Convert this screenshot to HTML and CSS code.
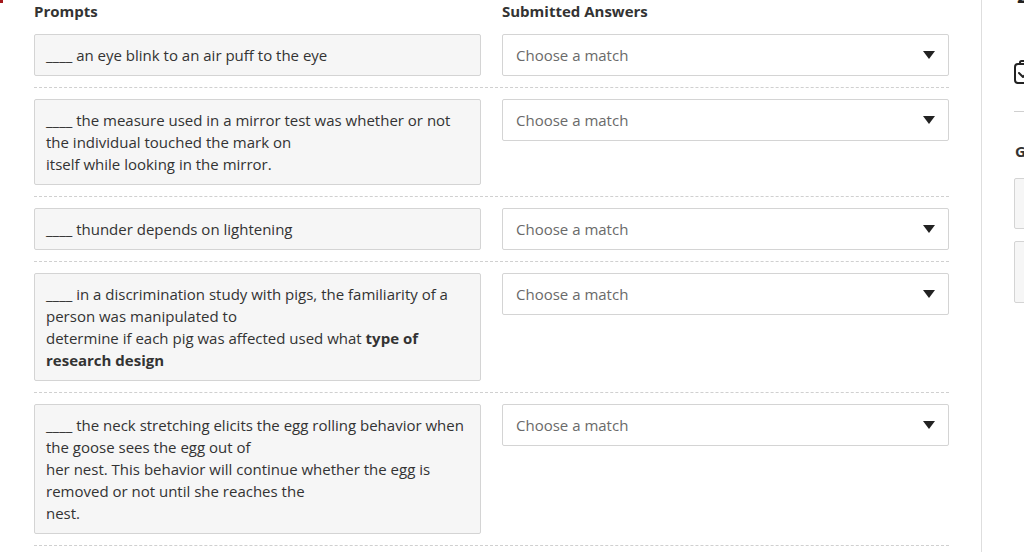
FILE: index.html
```html
<!DOCTYPE html>
<html lang="en">
<head>
<meta charset="utf-8">
<title>Matching question</title>
<link rel="stylesheet" href="styles.css">
</head>
<body>
<div class="page">
  <div class="corner-mark"></div>
  <main class="matching">
    <div class="col-heads">
      <div class="col-head">Prompts</div>
      <div class="col-head">Submitted Answers</div>
    </div>

    <div class="match-row">
      <div class="prompt">____ an eye blink to an air puff to the eye</div>
      <div class="choice"><span class="choice-text">Choose a match</span><svg class="caret" width="12" height="8" viewBox="0 0 12 8"><path d="M0 0H12L6 8Z" fill="#222"/></svg></div>
    </div>

    <div class="match-row">
      <div class="prompt">____ the measure used in a mirror test was whether or not the individual touched the mark on<br>itself while looking in the mirror.</div>
      <div class="choice"><span class="choice-text">Choose a match</span><svg class="caret" width="12" height="8" viewBox="0 0 12 8"><path d="M0 0H12L6 8Z" fill="#222"/></svg></div>
    </div>

    <div class="match-row">
      <div class="prompt">____ thunder depends on lightening</div>
      <div class="choice"><span class="choice-text">Choose a match</span><svg class="caret" width="12" height="8" viewBox="0 0 12 8"><path d="M0 0H12L6 8Z" fill="#222"/></svg></div>
    </div>

    <div class="match-row">
      <div class="prompt">____ in a discrimination study with pigs, the familiarity of a person was manipulated to<br>determine if each pig was affected used what <b>type of research design</b></div>
      <div class="choice"><span class="choice-text">Choose a match</span><svg class="caret" width="12" height="8" viewBox="0 0 12 8"><path d="M0 0H12L6 8Z" fill="#222"/></svg></div>
    </div>

    <div class="match-row">
      <div class="prompt">____ the neck stretching elicits the egg rolling behavior when the goose sees the egg out of<br>her nest. This behavior will continue whether the egg is removed or not until she reaches the<br>nest.</div>
      <div class="choice"><span class="choice-text">Choose a match</span><svg class="caret" width="12" height="8" viewBox="0 0 12 8"><path d="M0 0H12L6 8Z" fill="#222"/></svg></div>
    </div>
  </main>

  <aside class="side">
    <div class="side-num">2</div>
    <svg class="side-icon" width="24" height="24" viewBox="0 0 24 24" fill="none" stroke="#222" stroke-width="2" stroke-linejoin="round" stroke-linecap="round">
      <rect x="1" y="4" width="20" height="19" rx="3"/>
      <path d="M6 4V2.5C6 1.7 6.7 1 7.5 1H14.5C15.3 1 16 1.7 16 2.5V4"/>
      <path d="M5 13L9 17L17 9"/>
    </svg>
    <div class="side-rule"></div>
    <div class="side-head">Grade</div>
    <div class="side-box short"></div>
    <div class="side-box tall"></div>
  </aside>
</div>
</body>
</html>
```

FILE: styles.css
```css
* {
  box-sizing: border-box;
}

html, body {
  margin: 0;
  padding: 0;
  background: #fff;
}

body {
  font-family: "Open Sans", "Liberation Sans", sans-serif;
  font-size: 15px;
  line-height: 22px;
  color: #333;
}

.page {
  display: flex;
  width: 1024px;
  height: 552px;
  overflow: hidden;
  position: relative;
}

.corner-mark {
  position: absolute;
  left: 0;
  top: 0;
  width: 3px;
  height: 3px;
  background: #a3171b;
}

.matching {
  flex: 0 0 915px;
  margin-left: 34px;
  margin-right: 32px;
}

.col-heads {
  display: grid;
  grid-template-columns: 447px 447px;
  column-gap: 21px;
  margin-bottom: 1px;
}

.col-head {
  font-weight: 700;
  color: #333;
}

.match-row {
  display: grid;
  grid-template-columns: 447px 447px;
  column-gap: 21px;
  align-items: start;
  padding: 11px 0;
  border-bottom: 1px dashed #d0d0d0;
}

.prompt {
  background: #f6f6f6;
  border: 1px solid #d4d4d4;
  border-radius: 2px;
  padding: 9px 12px 9px 11px;
  color: #333;
}

.prompt b {
  font-weight: 700;
}

.choice {
  display: flex;
  align-items: center;
  justify-content: space-between;
  height: 42px;
  border: 1px solid #d4d4d4;
  border-radius: 2px;
  padding: 0 13px 1px 13px;
  background: #fff;
}

.choice-text {
  color: #6a6a6a;
}

.caret {
  display: block;
  flex: none;
  margin-top: 1px;
}

.side {
  flex: 1 0 auto;
  border-left: 1px solid #dedede;
  padding-left: 32px;
  display: flex;
  flex-direction: column;
  align-items: flex-start;
}

.side-num {
  font-size: 20px;
  font-weight: 700;
  line-height: 20px;
  margin-top: -14px;
  margin-left: 3px;
  color: #222;
}

.side-icon {
  display: block;
  margin-top: 54px;
}

.side-rule {
  width: 300px;
  border-top: 1px solid #d0d0d0;
  margin-top: 27px;
}

.side-head {
  font-weight: 700;
  margin-top: 28px;
  margin-left: 1px;
  color: #333;
  white-space: nowrap;
}

.side-box {
  width: 300px;
  background: #f6f6f6;
  border: 1px solid #d4d4d4;
  border-radius: 2px;
}

.side-box.short {
  height: 51px;
  margin-top: 16px;
}

.side-box.tall {
  height: 62px;
  margin-top: 12px;
}
```
